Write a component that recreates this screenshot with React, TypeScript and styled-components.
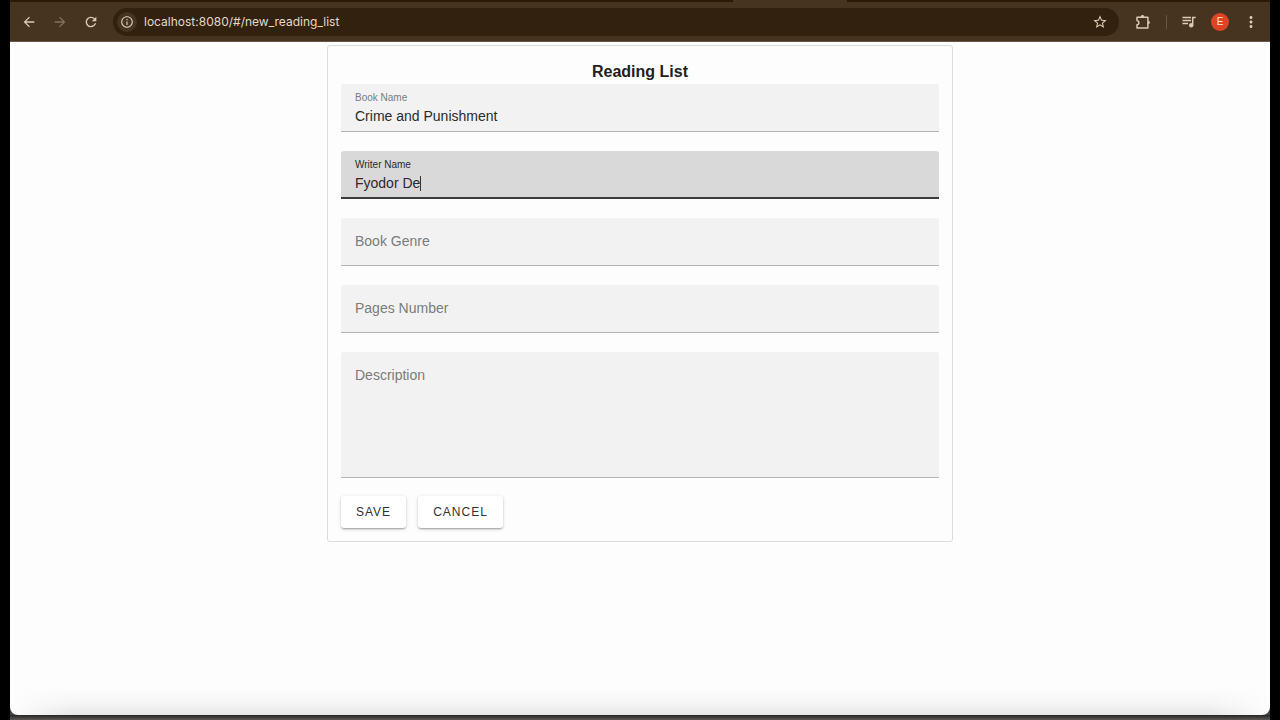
import React, { useState } from "react";
import styled, { createGlobalStyle } from "styled-components";
import {
  MdArrowBack,
  MdArrowForward,
  MdMoreVert,
  MdRefresh,
  MdStarBorder,
  MdInfoOutline,
} from "react-icons/md";

const GlobalStyle = createGlobalStyle`
  *, *::before, *::after { box-sizing: border-box; }
  body {
    margin: 0;
    background: #000;
    font-family: "Liberation Sans", Arial, sans-serif;
  }
  button, input, textarea { font: inherit; }
`;

const Desktop = styled.div`
  display: flex;
  flex-direction: column;
  min-height: 100vh;
  padding: 0 10px;
`;

const Browser = styled.div`
  flex: 1;
  display: flex;
  flex-direction: column;
  background: #45423f;
`;

const TabStrip = styled.div`
  display: flex;
  justify-content: center;
  height: 2px;
  padding-left: 300px;
  background: #2b1a06;
`;

const ActiveTab = styled.div`
  width: 114px;
  background: #483521;
`;

const Toolbar = styled.header`
  display: flex;
  align-items: center;
  height: 40px;
  padding: 0 9px;
  background: #463420;
  border-bottom: 1px solid #66574a;
`;

const NavGroup = styled.nav`
  display: flex;
  gap: 11px;
  margin-right: 12px;
`;

const IconButton = styled.button<{ $dim?: boolean }>`
  display: flex;
  align-items: center;
  justify-content: center;
  width: 20px;
  height: 20px;
  padding: 0;
  border: 0;
  background: none;
  color: ${(p) => (p.$dim ? "#85715a" : "#dccab2")};
`;

const AddressBar = styled.div`
  flex: 1;
  display: flex;
  align-items: center;
  gap: 7px;
  height: 28px;
  padding: 0 9px 0 4px;
  border-radius: 14px;
  background: #32210e;
`;

const SiteInfo = styled(IconButton)`
  border-radius: 50%;
  background: #463420;
`;

const Address = styled.input`
  flex: 1;
  min-width: 0;
  padding: 0;
  border: 0;
  outline: 0;
  background: none;
  color: #e4d8c8;
  font-family: Inter, sans-serif;
  font-size: 12px;
  line-height: 20px;
`;

const Actions = styled.div`
  display: flex;
  align-items: center;
  gap: 12px;
  padding-left: 14px;
`;

const Divider = styled.span`
  width: 1px;
  height: 14px;
  margin-left: 1px;
  background: #6a543b;
`;

const Avatar = styled.button`
  width: 18px;
  height: 18px;
  padding: 0;
  border: 0;
  border-radius: 50%;
  background: #dc4425;
  color: #fbe3da;
  font-size: 10px;
  line-height: 18px;
  text-align: center;
`;

const Page = styled.main`
  flex: 1;
  padding: 3px 16px 32px;
  border-radius: 0 0 8px 8px;
  background:
    linear-gradient(to right, #fdfdfd, transparent 60px, transparent calc(100% - 60px), #fdfdfd) bottom / 100% 28px no-repeat,
    linear-gradient(#fdfdfd, #f5f5f5 60%, #e6e6e6) bottom / 100% 28px no-repeat,
    #fdfdfd;
`;

const Dock = styled.div`
  height: 5px;
  background: linear-gradient(#262422, #5c5955);
`;

const Card = styled.form`
  max-width: 626px;
  margin: 0 auto;
  padding: 13px;
  border: 1px solid #d9dcde;
  border-radius: 3px;
`;

const Title = styled.h1`
  margin: 0;
  color: #212121;
  font-size: 16px;
  line-height: 25px;
  text-align: center;
`;

const Fields = styled.div`
  display: flex;
  flex-direction: column;
  gap: 19px;
`;

const Field = styled.div<{ $active?: boolean; $tall?: boolean }>`
  position: relative;
  height: ${(p) => (p.$tall ? 126 : 48)}px;
  border-radius: 3px 3px 0 0;
  border-bottom: ${(p) => (p.$active ? "2px solid #3c3c3e" : "1px solid #b4b4b4")};
  background: ${(p) => (p.$active ? "#d9d9d9" : "#f2f2f2")};
`;

const Label = styled.label<{ $floating?: boolean; $active?: boolean }>`
  position: absolute;
  top: ${(p) => (p.$floating ? 7 : 13)}px;
  left: 14px;
  color: ${(p) => (p.$active ? "#2b2b2b" : "#7b7b7b")};
  font-size: ${(p) => (p.$floating ? 10 : 14)}px;
  line-height: ${(p) => (p.$floating ? 14 : 20)}px;
  pointer-events: none;
`;

const TextInput = styled.input`
  display: block;
  width: 100%;
  height: 46px;
  padding: 18px 14px 1px;
  border: 0;
  outline: 0;
  background: none;
  color: #2a2a2a;
  font-size: 14px;
  line-height: 20px;
`;

const TextArea = styled.textarea`
  display: block;
  width: 100%;
  height: 100%;
  padding: 22px 14px 0;
  border: 0;
  outline: 0;
  resize: none;
  background: none;
  color: #2a2a2a;
  font-size: 14px;
  line-height: 20px;
`;

const Caret = styled.span`
  position: absolute;
  top: 25px;
  left: 79px;
  width: 1px;
  height: 15px;
  background: #333;
`;

const Buttons = styled.div`
  display: flex;
  gap: 12px;
  padding-top: 18px;
`;

const Button = styled.button`
  height: 32px;
  padding: 0 15px;
  border: 0;
  border-radius: 3px;
  background: #fff;
  box-shadow: 0 2px 2px -1px rgba(0, 0, 0, 0.22), 0 1px 2px rgba(0, 0, 0, 0.16), 0 1px 4px rgba(0, 0, 0, 0.1);
  color: #303030;
  font-size: 12px;
  letter-spacing: 1px;
  text-transform: uppercase;
`;

const PuzzleIcon = () => (
  <svg width="18" height="18" viewBox="0 0 18 18" fill="none" stroke="currentColor" strokeWidth="1.5" strokeLinejoin="round">
    <path d="M3 4.2h10.9v10.9H3v-3.3c2.6-.4 2.6-3.8 0-4.2z" />
    <path d="M6.6 4a1.9 1.9 0 0 1 3.8 0zM14.1 7.8a1.8 1.8 0 0 1 0 3.6z" fill="currentColor" stroke="none" />
  </svg>
);

const MediaIcon = () => (
  <svg width="18" height="18" viewBox="0 0 18 18" fill="none" stroke="currentColor" strokeWidth="1.5">
    <path d="M2.5 4.5h8.5M2.5 7.5h8.5M2.5 10.5h5.5M12.7 11.8V4.5h3" />
    <circle cx="11.2" cy="12.2" r="2.2" fill="currentColor" stroke="none" />
  </svg>
);

type FieldName = "book" | "writer" | "genre" | "pages" | "description";

const FIELDS: { name: FieldName; label: string; tall?: boolean }[] = [
  { name: "book", label: "Book Name" },
  { name: "writer", label: "Writer Name" },
  { name: "genre", label: "Book Genre" },
  { name: "pages", label: "Pages Number" },
  { name: "description", label: "Description", tall: true },
];

export default function App() {
  const [values, setValues] = useState<Record<FieldName, string>>({
    book: "Crime and Punishment",
    writer: "Fyodor De",
    genre: "",
    pages: "",
    description: "",
  });
  const [active, setActive] = useState<FieldName>("writer");

  return (
    <>
      <GlobalStyle />
      <Desktop>
        <Browser>
          <TabStrip>
            <ActiveTab />
          </TabStrip>
          <Toolbar>
            <NavGroup>
              <IconButton aria-label="Back"><MdArrowBack size={16} /></IconButton>
              <IconButton aria-label="Forward" $dim><MdArrowForward size={16} /></IconButton>
              <IconButton aria-label="Reload"><MdRefresh size={16} /></IconButton>
            </NavGroup>
            <AddressBar>
              <SiteInfo aria-label="Site information"><MdInfoOutline size={14} /></SiteInfo>
              <Address aria-label="Address" defaultValue="localhost:8080/#/new_reading_list" spellCheck={false} />
              <IconButton aria-label="Bookmark"><MdStarBorder size={16} /></IconButton>
            </AddressBar>
            <Actions>
              <IconButton aria-label="Extensions"><PuzzleIcon /></IconButton>
              <Divider />
              <IconButton aria-label="Media"><MediaIcon /></IconButton>
              <Avatar aria-label="Profile">E</Avatar>
              <IconButton aria-label="Menu"><MdMoreVert size={18} /></IconButton>
            </Actions>
          </Toolbar>
          <Page>
            <Card onSubmit={(e) => e.preventDefault()}>
              <Title>Reading List</Title>
              <Fields>
                {FIELDS.map(({ name, label, tall }) => {
                  const isActive = active === name;
                  const common = {
                    id: name,
                    value: values[name],
                    spellCheck: false,
                    onFocus: () => setActive(name),
                    onChange: (e: React.ChangeEvent<HTMLInputElement | HTMLTextAreaElement>) =>
                      setValues({ ...values, [name]: e.target.value }),
                  };
                  return (
                    <Field key={name} $active={isActive} $tall={tall}>
                      <Label htmlFor={name} $floating={isActive || values[name] !== ""} $active={isActive}>
                        {label}
                      </Label>
                      {tall ? <TextArea {...common} /> : <TextInput type="text" {...common} />}
                      {name === "writer" && values.writer === "Fyodor De" && isActive && <Caret />}
                    </Field>
                  );
                })}
              </Fields>
              <Buttons>
                <Button type="submit">Save</Button>
                <Button type="button">Cancel</Button>
              </Buttons>
            </Card>
          </Page>
          <Dock />
        </Browser>
      </Desktop>
    </>
  );
}
